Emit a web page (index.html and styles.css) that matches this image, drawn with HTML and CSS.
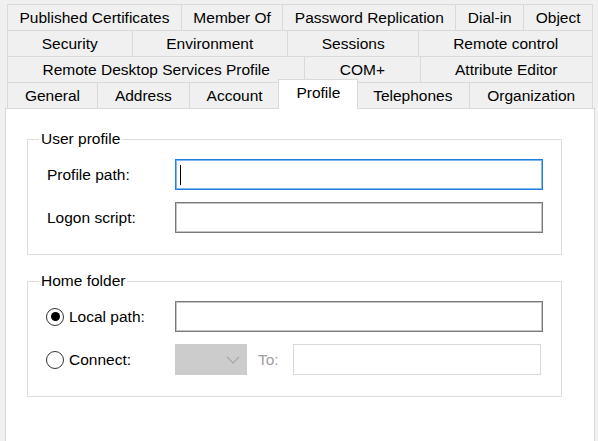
FILE: index.html
```html
<!DOCTYPE html>
<html lang="en">
<head>
  <meta charset="UTF-8">
  <title>User Properties - Profile</title>
  <link rel="stylesheet" href="styles.css">
</head>
<body>

<div class="dialog">
  <div class="tabs">
    <div class="tab-row">
      <div class="tab">Published Certificates</div>
      <div class="tab">Member Of</div>
      <div class="tab">Password Replication</div>
      <div class="tab">Dial-in</div>
      <div class="tab">Object</div>
    </div>
    <div class="tab-row">
      <div class="tab">Security</div>
      <div class="tab">Environment</div>
      <div class="tab">Sessions</div>
      <div class="tab">Remote control</div>
    </div>
    <div class="tab-row">
      <div class="tab">Remote Desktop Services Profile</div>
      <div class="tab">COM+</div>
      <div class="tab">Attribute Editor</div>
    </div>
    <div class="tab-row">
      <div class="tab">General</div>
      <div class="tab">Address</div>
      <div class="tab">Account</div>
      <div class="tab active">Profile</div>
      <div class="tab">Telephones</div>
      <div class="tab">Organization</div>
    </div>
  </div>

  <div class="panel">
    <fieldset class="group">
      <legend>User profile</legend>
      <div class="form-grid">
        <label>Profile path:</label>
        <div class="field focus"><span class="caret"></span></div>
        <label>Logon script:</label>
        <div class="field"></div>
      </div>
    </fieldset>

    <fieldset class="group home">
      <legend>Home folder</legend>
      <div class="form-grid">
        <label class="radio"><span class="dot checked"></span>Local path:</label>
        <div class="field"></div>
        <label class="radio"><span class="dot"></span>Connect:</label>
        <div class="connect">
          <div class="combo">
            <svg width="14" height="8" viewBox="0 0 14 8"><path d="M1 1 L7 7 L13 1" fill="none" stroke="#a6a6a6" stroke-width="1.2"/></svg>
          </div>
          <span class="to">To:</span>
          <div class="field disabled"></div>
        </div>
      </div>
    </fieldset>
  </div>
</div>

</body>
</html>
```

FILE: styles.css
```css
body {
  margin: 0;
  height: 441px;
  overflow: hidden;
  font-family: "Liberation Sans", Arial, sans-serif;
  font-size: 15.5px;
  color: #000;
  background-color: #f0f0f0;
}

.dialog {
  display: flex;
  flex-direction: column;
  padding: 4px 3px 0 5px;
}

.tabs {
  display: flex;
  flex-direction: column;
  padding: 0 2px;
}

.tab-row {
  display: flex;
  height: 26px;
}

.tab {
  flex: 1 1 auto;
  display: flex;
  align-items: center;
  justify-content: center;
  white-space: nowrap;
  background-color: #f0f0f0;
  border: 1px solid #d9d9d9;
  border-bottom: none;
  margin-left: -1px;
}

.tab:first-child {
  margin-left: 0;
}

.tab.active {
  position: relative;
  z-index: 1;
  margin: -3px -2px -1px;
  padding-bottom: 3px;
  background-color: #fff;
}

.panel {
  height: 333px;
  box-sizing: border-box;
  background-color: #fff;
  border: 1px solid #d9d9d9;
  border-bottom: none;
  padding: 21px 32px 0 21px;
}

.group {
  margin: 0;
  padding: 11px 18px 21px 19px;
  border: 1px solid #dcdcdc;
}

.group.home {
  margin-top: 17px;
}

.group legend {
  margin-left: -8px;
  padding: 0 2px;
  line-height: 18px;
}

.form-grid {
  display: grid;
  grid-template-columns: 128px 1fr;
  row-gap: 12px;
  align-items: center;
}

.field {
  height: 31px;
  box-sizing: border-box;
  border: 1px solid #7a7a7a;
  box-shadow: inset 0 0 0 1px #c4c4c4;
  background-color: #fff;
}

.field.focus {
  border-color: #1f7ee0;
  box-shadow: inset 0 0 0 1px #7fb6ee;
  display: flex;
  align-items: center;
  padding-left: 4px;
}

.caret {
  width: 1px;
  height: 20px;
  background-color: #000;
}

.field.disabled {
  flex: 1;
  margin-right: 2px;
  border-color: #d9d9d9;
  box-shadow: none;
}

.radio {
  display: flex;
  align-items: center;
  gap: 5px;
  margin-left: -1px;
}

.dot {
  width: 16px;
  height: 16px;
  border: 1.5px solid #333;
  border-radius: 50%;
  display: flex;
  align-items: center;
  justify-content: center;
}

.dot.checked::after {
  content: "";
  width: 9px;
  height: 9px;
  border-radius: 50%;
  background-color: #000;
}

.connect {
  display: flex;
  align-items: center;
}

.combo {
  width: 72px;
  height: 31px;
  box-sizing: border-box;
  background-color: #cccccc;
  display: flex;
  align-items: center;
  justify-content: flex-end;
  padding-right: 7px;
}

.to {
  color: #a0a0a0;
  margin: 0 14px 0 11px;
}
```
